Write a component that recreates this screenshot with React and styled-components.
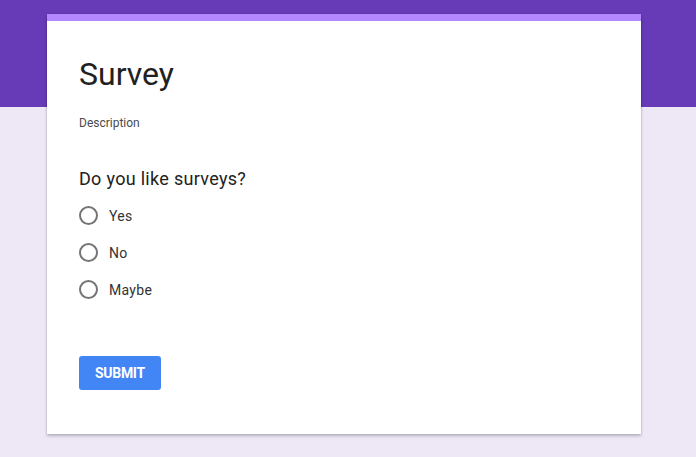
import React from "react";
import styled, { createGlobalStyle } from "styled-components";

const GlobalStyle = createGlobalStyle`
  html, body {
    margin: 0;
    padding: 0;
    background: #ede7f6;
    font-family: Roboto, "Liberation Sans", Arial, sans-serif;
  }
`;

const Page = styled.div`
  min-height: 457px;
  padding-top: 14px;
  box-sizing: border-box;
  background: linear-gradient(#673ab7 0, #673ab7 107px, #ede7f6 107px);
`;

const Card = styled.form`
  width: 594px;
  margin-left: 47px;
  box-sizing: border-box;
  background: #fff;
  border-top: 7px solid #b388ff;
  padding: 33px 32px 44px;
  box-shadow: 0 2px 3px rgba(0, 0, 0, 0.22), 0 0 2px rgba(0, 0, 0, 0.12);
`;

const Title = styled.h1`
  margin: 0;
  font-size: 32px;
  line-height: 40px;
  font-weight: 400;
  color: #212121;
`;

const Description = styled.p`
  margin: 21px 0 0;
  font-size: 12px;
  line-height: 16px;
  color: #4a4a4a;
`;

const Question = styled.h2`
  margin: 36px 0 0;
  font-size: 18px;
  line-height: 24px;
  font-weight: 400;
  letter-spacing: 0.3px;
  color: #212121;
`;

const Options = styled.div`
  margin-top: 6px;
  display: flex;
  flex-direction: column;
`;

const Option = styled.label`
  height: 37px;
  display: flex;
  align-items: center;
  gap: 11px;
  cursor: pointer;
`;

const Circle = styled.span`
  width: 19px;
  height: 19px;
  box-sizing: border-box;
  border: 2px solid #757575;
  border-radius: 50%;
  flex-shrink: 0;
`;

const OptionText = styled.span`
  font-size: 14px;
  line-height: 20px;
  letter-spacing: 0.3px;
  color: #333;
`;

const Submit = styled.button`
  margin-top: 48px;
  height: 34px;
  padding: 0 16px;
  border: none;
  border-radius: 3px;
  background: #4285f4;
  color: #fff;
  font-family: inherit;
  font-size: 14px;
  font-weight: 700;
  letter-spacing: -0.3px;
  cursor: pointer;
`;

const answers = ["Yes", "No", "Maybe"];

export default function App() {
  return (
    <>
      <GlobalStyle />
      <Page>
        <Card onSubmit={(e) => e.preventDefault()}>
          <Title>Survey</Title>
          <Description>Description</Description>
          <Question>Do you like surveys?</Question>
          <Options>
            {answers.map((a) => (
              <Option key={a}>
                <Circle />
                <OptionText>{a}</OptionText>
              </Option>
            ))}
          </Options>
          <Submit type="submit">SUBMIT</Submit>
        </Card>
      </Page>
    </>
  );
}
